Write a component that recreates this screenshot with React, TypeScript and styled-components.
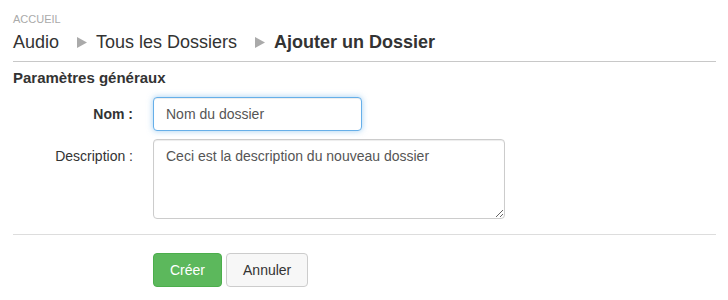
import React from "react";
import styled, { createGlobalStyle } from "styled-components";

const GlobalStyle = createGlobalStyle`
  body {
    margin: 0;
    background: #fff;
    font-family: "Liberation Sans", Arial, sans-serif;
    color: #333;
  }
`;

const Page = styled.div`
  padding: 12px 12px 0 13px;
`;

const Kicker = styled.div`
  font-size: 11px;
  line-height: 14px;
  color: #aaa;
  text-transform: uppercase;
`;

const Trail = styled.div`
  display: flex;
  align-items: center;
  margin-top: 5px;
  font-size: 18px;
  line-height: 22px;
  color: #333;
  padding-bottom: 8px;
  border-bottom: 1px solid #c8c8c8;
`;

const Crumb = styled.span<{ $current?: boolean }>`
  font-weight: ${(p) => (p.$current ? "bold" : "normal")};
`;

const Sep = styled.svg`
  margin: 0 9px 0 18px;
  flex: none;
`;

const SectionTitle = styled.h3`
  margin: 6px 0 0;
  font-size: 15px;
  line-height: 20px;
  font-weight: bold;
`;

const Form = styled.form`
  display: grid;
  grid-template-columns: 120px 1fr;
  column-gap: 20px;
  row-gap: 8px;
  margin-top: 9px;
`;

const Label = styled.label<{ $strong?: boolean }>`
  text-align: right;
  padding-top: 7px;
  font-size: 14px;
  line-height: 20px;
  font-weight: ${(p) => (p.$strong ? "bold" : "normal")};
`;

const fieldBase = `
  box-sizing: border-box;
  font-family: "Liberation Sans", Arial, sans-serif;
  font-size: 14px;
  line-height: 20px;
  color: #555;
  background: #fff;
  border-radius: 4px;
  padding: 6px 12px;
  outline: none;
`;

const TextInput = styled.input<{ $focused?: boolean }>`
  ${fieldBase}
  width: 209px;
  height: 34px;
  border: 1px solid ${(p) => (p.$focused ? "#66afe9" : "#ccc")};
  box-shadow: ${(p) =>
    p.$focused
      ? "inset 0 1px 1px rgba(0,0,0,.075), 0 0 6px rgba(102,175,233,.6)"
      : "inset 0 1px 1px rgba(0,0,0,.075)"};
`;

const TextArea = styled.textarea`
  ${fieldBase}
  display: block;
  width: 352px;
  height: 80px;
  border: 1px solid #ccc;
  box-shadow: inset 0 1px 1px rgba(0, 0, 0, 0.075);
  resize: vertical;
`;

const Divider = styled.hr`
  grid-column: 1 / -1;
  border: 0;
  border-top: 1px solid #ddd;
  margin: 7px 0 10px;
  width: 100%;
`;

const Actions = styled.div`
  grid-column: 2;
  display: flex;
  gap: 4px;
`;

const Button = styled.button<{ $variant?: "success" | "default" }>`
  box-sizing: border-box;
  height: 34px;
  padding: 6px 16px;
  font-family: "Liberation Sans", Arial, sans-serif;
  font-size: 14px;
  line-height: 20px;
  border-radius: 4px;
  cursor: pointer;
  color: ${(p) => (p.$variant === "success" ? "#fff" : "#333")};
  background: ${(p) => (p.$variant === "success" ? "#5cb85c" : "#f7f7f7")};
  border: 1px solid ${(p) => (p.$variant === "success" ? "#4cae4c" : "#ccc")};
`;

const Arrow = () => (
  <Sep width="10" height="11" viewBox="0 0 10 11">
    <polygon points="0,0 10,5.5 0,11" fill="#aaa" />
  </Sep>
);

export default function App() {
  return (
    <Page>
      <GlobalStyle />
      <Kicker>Accueil</Kicker>
      <Trail>
        <Crumb>Audio</Crumb>
        <Arrow />
        <Crumb>Tous les Dossiers</Crumb>
        <Arrow />
        <Crumb $current>Ajouter un Dossier</Crumb>
      </Trail>
      <SectionTitle>Paramètres généraux</SectionTitle>
      <Form onSubmit={(e) => e.preventDefault()}>
        <Label $strong htmlFor="nom">Nom :</Label>
        <div>
          <TextInput id="nom" $focused defaultValue="Nom du dossier" />
        </div>
        <Label htmlFor="desc">Description :</Label>
        <div>
          <TextArea id="desc" defaultValue="Ceci est la description du nouveau dossier" />
        </div>
        <Divider />
        <Actions>
          <Button type="submit" $variant="success">Créer</Button>
          <Button type="button">Annuler</Button>
        </Actions>
      </Form>
    </Page>
  );
}
